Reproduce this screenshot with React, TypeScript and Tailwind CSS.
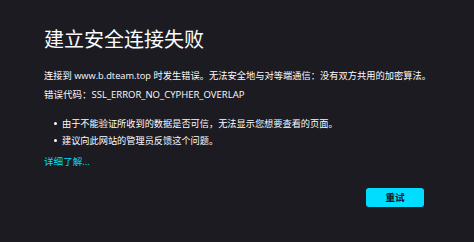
export default function App() {
  const font = { fontFamily: '"Segoe UI", "Open Sans", "Noto Sans CJK SC", sans-serif' };
  return (
    <div
      className="w-[474px] h-[242px] bg-[#1c1b22] text-[#fbfbfe] pl-[44px] pr-[50px] pt-[30px] flex flex-col"
      style={font}
    >
      <h1 className="text-[20px] leading-[20px] font-normal">建立安全连接失败</h1>
      <p className="mt-[16px] text-[9.25px] leading-[19px] whitespace-nowrap">
        连接到 www.b.dteam.top 时发生错误。无法安全地与对等端通信：没有双方共用的加密算法。
      </p>
      <p className="text-[9.5px] leading-[19px] whitespace-nowrap">错误代码：SSL_ERROR_NO_CYPHER_OVERLAP</p>
      <ul className="mt-[11px] text-[9.2px] leading-[17px]">
        <li className="flex items-center">
          <span className="w-[3px] h-[3px] rounded-full bg-[#fbfbfe] ml-[10px] mr-[5px]" />
          由于不能验证所收到的数据是否可信，无法显示您想要查看的页面。
        </li>
        <li className="flex items-center">
          <span className="w-[3px] h-[3px] rounded-full bg-[#fbfbfe] ml-[10px] mr-[5px]" />
          建议向此网站的管理员反馈这个问题。
        </li>
      </ul>
      <a className="mt-[4px] text-[9.6px] leading-[17px] text-[#00ddff] w-fit" href="#">
        详细了解…
      </a>
      <div className="mt-[18px] flex justify-end">
        <button className="w-[58px] h-[19px] rounded-[3px] bg-[#00ddff] text-[#15141a] text-[9.6px] font-bold leading-[19px]">
          重试
        </button>
      </div>
    </div>
  );
}
